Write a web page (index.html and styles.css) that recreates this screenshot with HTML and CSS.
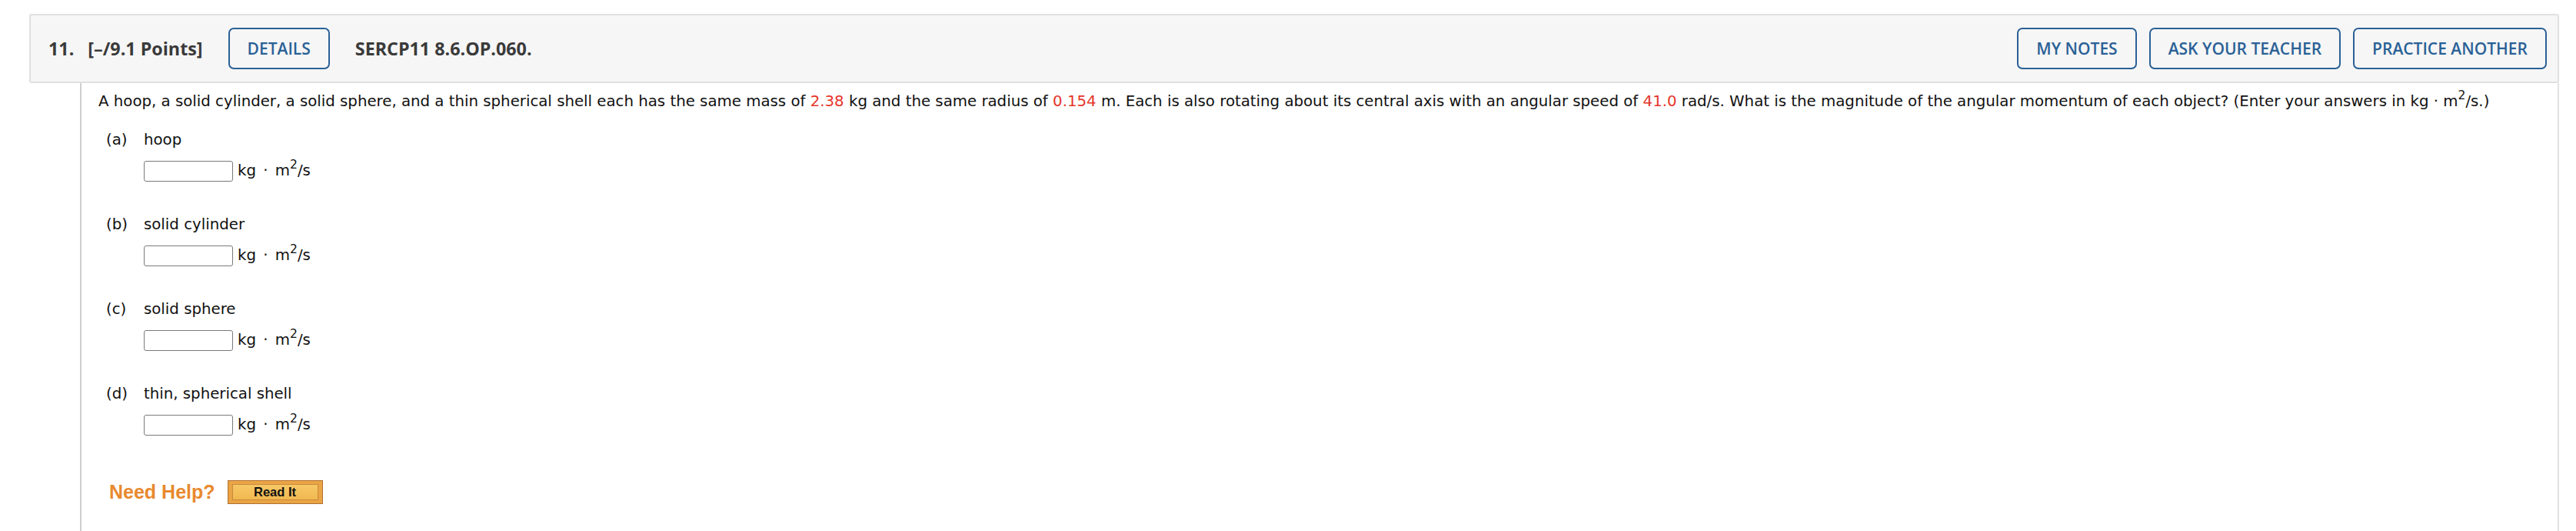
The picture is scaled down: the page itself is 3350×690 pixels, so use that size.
FILE: index.html
```html
<!DOCTYPE html>
<html lang="en">
<head>
<meta charset="utf-8">
<title>Question 11</title>
<link rel="stylesheet" href="styles.css">
</head>
<body>
<div class="question">
  <div class="qheader">
    <div class="qtitle">
      <span class="qnum">11.</span>
      <span class="qpoints">[&ndash;/9.1 Points]</span>
    </div>
    <button class="qbtn">DETAILS</button>
    <div class="qcode">SERCP11 8.6.OP.060.</div>
    <div class="spacer"></div>
    <div class="qactions">
      <button class="qbtn">MY NOTES</button>
      <button class="qbtn">ASK YOUR TEACHER</button>
      <button class="qbtn">PRACTICE ANOTHER</button>
    </div>
  </div>
  <div class="qbody">
    <p class="prompt">A hoop, a solid cylinder, a solid sphere, and a thin spherical shell each has the same mass of <span class="val">2.38</span> kg and the same radius of <span class="val">0.154</span> m. Each is also rotating about its central axis with an angular speed of <span class="val">41.0</span> rad/s. What is the magnitude of the angular momentum of each object? (Enter your answers in kg &middot; m<sup>2</sup>/s.)</p>

    <div class="part">
      <div class="plabel"><span class="pletter">(a)</span><span>hoop</span></div>
      <div class="prow"><span class="answer"></span><span class="unit">kg &middot; m<sup>2</sup>/s</span></div>
    </div>
    <div class="part">
      <div class="plabel"><span class="pletter">(b)</span><span>solid cylinder</span></div>
      <div class="prow"><span class="answer"></span><span class="unit">kg &middot; m<sup>2</sup>/s</span></div>
    </div>
    <div class="part">
      <div class="plabel"><span class="pletter">(c)</span><span>solid sphere</span></div>
      <div class="prow"><span class="answer"></span><span class="unit">kg &middot; m<sup>2</sup>/s</span></div>
    </div>
    <div class="part">
      <div class="plabel"><span class="pletter">(d)</span><span>thin, spherical shell</span></div>
      <div class="prow"><span class="answer"></span><span class="unit">kg &middot; m<sup>2</sup>/s</span></div>
    </div>

    <div class="help">
      <span class="helptext">Need Help?</span>
      <span class="readit"><span class="readit-in">Read It</span></span>
    </div>
  </div>
</div>
</body>
</html>
```

FILE: styles.css
```css
html, body {
  margin: 0;
  padding: 0;
  background: #ffffff;
}

body {
  height: 690px;
  overflow: hidden;
}

.question {
  padding: 18px 22px 0 38px;
  height: 672px;
  display: flex;
  flex-direction: column;
}

.qheader {
  display: flex;
  align-items: center;
  background: #f6f6f6;
  border: 2px solid #e0e0e0;
  border-radius: 3px;
  height: 86px;
  padding: 0 14px 0 23px;
  font-family: "Open Sans", "Liberation Sans", sans-serif;
  color: #3a3a3a;
  flex: none;
}

.qtitle {
  font-size: 23.3px;
  font-weight: 700;
  white-space: nowrap;
  margin-right: 33px;
}

.qnum {
  margin-right: 12px;
}

.qcode {
  font-size: 23.3px;
  font-weight: 700;
  margin-left: 33px;
  white-space: nowrap;
}

.spacer {
  flex: 1;
}

.qactions {
  display: flex;
  gap: 16px;
}

.qbtn {
  font-family: "Open Sans", "Liberation Sans", sans-serif;
  font-size: 21px;
  font-weight: 600;
  color: #2a6196;
  background: transparent;
  border: 2px solid #2a6196;
  border-radius: 7px;
  height: 54px;
  padding: 0 23px;
  white-space: nowrap;
  cursor: pointer;
}

.qbody {
  flex: 1;
  margin-left: 66px;
  border-left: 2px solid #cfcfcf;
  border-right: 2px solid #e2e2e2;
  padding: 10px 0 0 22px;
  font-family: "DejaVu Sans", Verdana, sans-serif;
  font-size: 19.75px;
  color: #111111;
}

.prompt {
  margin: 0;
  line-height: 27px;
  white-space: nowrap;
}

.val {
  color: #e5352a;
}

sup {
  font-size: 15.5px;
  line-height: 0;
  vertical-align: 9px;
}

.part {
  padding-left: 10px;
  margin-top: 23px;
}

.part + .part {
  margin-top: 42px;
}

.plabel {
  display: flex;
  line-height: 27px;
}

.pletter {
  width: 49px;
  flex: none;
}

.prow {
  display: flex;
  align-items: center;
  margin-top: 13px;
  padding-left: 49px;
  height: 28px;
}

.answer {
  display: block;
  width: 114px;
  height: 25px;
  border: 1.5px solid #7a7a7a;
  border-radius: 3px;
  background: #ffffff;
  flex: none;
}

.unit {
  margin-left: 6px;
  line-height: 28px;
  word-spacing: 3px;
}

.help {
  display: flex;
  align-items: center;
  margin-top: 57px;
  padding-left: 14px;
  height: 32px;
}

.helptext {
  font-family: "Liberation Sans", Arial, sans-serif;
  font-weight: 700;
  font-size: 25px;
  color: #e8892f;
  margin-right: 16px;
}

.readit {
  display: flex;
  box-sizing: border-box;
  width: 124px;
  height: 31px;
  padding: 4px 5px;
  background: #eaa445;
  border: 1px solid #b07030;
}

.readit-in {
  flex: 1;
  display: flex;
  align-items: center;
  justify-content: center;
  background: linear-gradient(#f6c866, #f2b850);
  border: 1px solid #c98a3c;
  font-family: "Liberation Sans", Arial, sans-serif;
  font-weight: 700;
  font-size: 16.5px;
  color: #111111;
}
```
